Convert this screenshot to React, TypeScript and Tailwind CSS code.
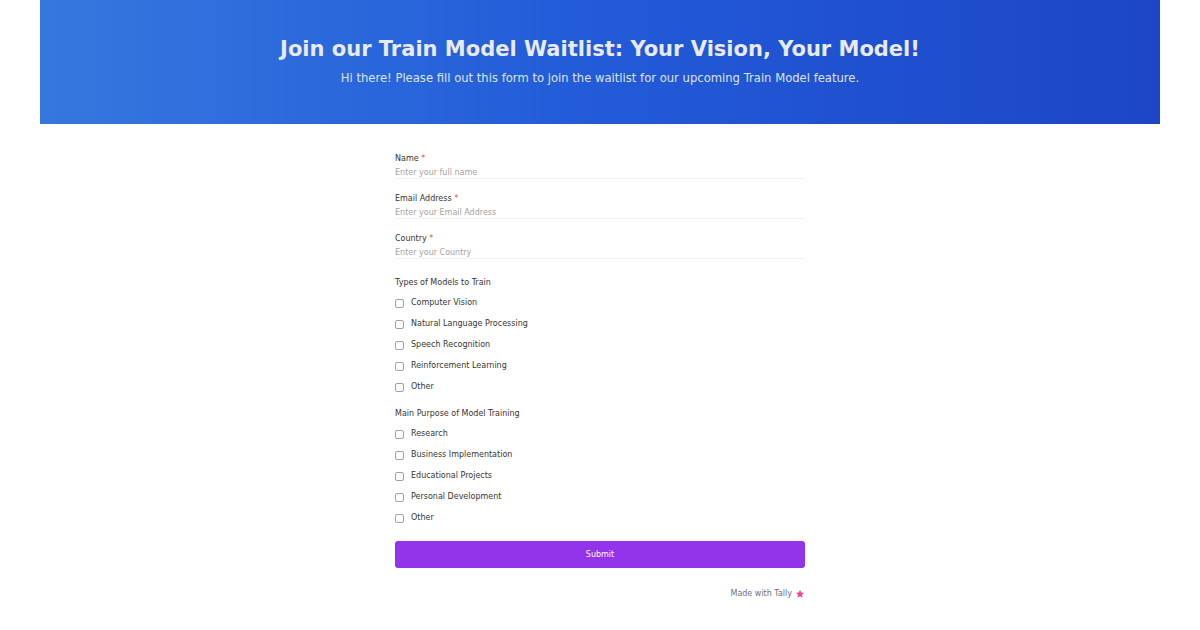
import React from "react";

const MODEL_TYPES = [
  "Computer Vision",
  "Natural Language Processing",
  "Speech Recognition",
  "Reinforcement Learning",
  "Other",
];

const PURPOSES = [
  "Research",
  "Business Implementation",
  "Educational Projects",
  "Personal Development",
  "Other",
];

function TextField({ label, placeholder }: { label: string; placeholder: string }) {
  return (
    <div className="flex flex-col">
      <label className="text-[8px] leading-[10px] text-[#37352f]">
        {label} <span className="text-[#ef4444]">*</span>
      </label>
      <div className="mt-[4px] h-[11px] border-b border-[#f1f1f0] text-[8px] leading-[10px] text-[#a3a3a3]">
        {placeholder}
      </div>
    </div>
  );
}

function CheckGroup({ title, items }: { title: string; items: string[] }) {
  return (
    <div className="flex flex-col">
      <div className="text-[8px] leading-[10px] text-[#37352f]">{title}</div>
      <div className="mt-[10px] flex flex-col gap-[11px]">
        {items.map((it) => (
          <div key={it} className="flex items-center gap-[7px] h-[10px]">
            <span className="w-[9px] h-[9px] rounded-[2px] border border-[#9ca3af] bg-white" />
            <span className="text-[8px] leading-[10px] text-[#37352f]">{it}</span>
          </div>
        ))}
      </div>
    </div>
  );
}

export default function App() {
  return (
    <div className="w-[1200px] h-[630px] bg-white" style={{ fontFamily: '"DejaVu Sans", sans-serif' }}>
      {/* Header banner */}
      <div className="mx-[40px] h-[124px] flex flex-col items-center pt-[35px] bg-gradient-to-r from-[#3677de] via-[#225ad8] to-[#1c46c5]">
        <h1 className="text-[21px] leading-[28px] font-bold text-[#e8eaf0]">
          Join our Train Model Waitlist: Your Vision, Your Model!
        </h1>
        <p className="mt-[8px] text-[11.6px] leading-[15px] text-[#dfe4f2]">
          Hi there! Please fill out this form to join the waitlist for our upcoming Train Model feature.
        </p>
      </div>

      {/* Form */}
      <div className="w-[410px] mx-auto pt-[30px] flex flex-col">
        <div className="flex flex-col gap-[15px]">
          <TextField label="Name" placeholder="Enter your full name" />
          <TextField label="Email Address" placeholder="Enter your Email Address" />
          <TextField label="Country" placeholder="Enter your Country" />
        </div>
        <div className="mt-[19px]">
          <CheckGroup title="Types of Models to Train" items={MODEL_TYPES} />
        </div>
        <div className="mt-[17px]">
          <CheckGroup title="Main Purpose of Model Training" items={PURPOSES} />
        </div>
        <button className="mt-[18px] h-[27px] w-full rounded-[3px] bg-[#9333ea] text-white text-[8px]">
          Submit
        </button>
        <div className="mt-[21px] flex items-center justify-end gap-[3px] text-[8px] leading-[10px] text-[#6b7280]">
          Made with Tally
          <svg width="10" height="10" viewBox="0 0 24 24" fill="#ec4899">
            <path d="M12 2l2.9 6.26L22 9.27l-5.2 4.73L18.18 21 12 17.27 5.82 21l1.38-7L2 9.27l7.1-1.01L12 2z" />
          </svg>
        </div>
      </div>
    </div>
  );
}
